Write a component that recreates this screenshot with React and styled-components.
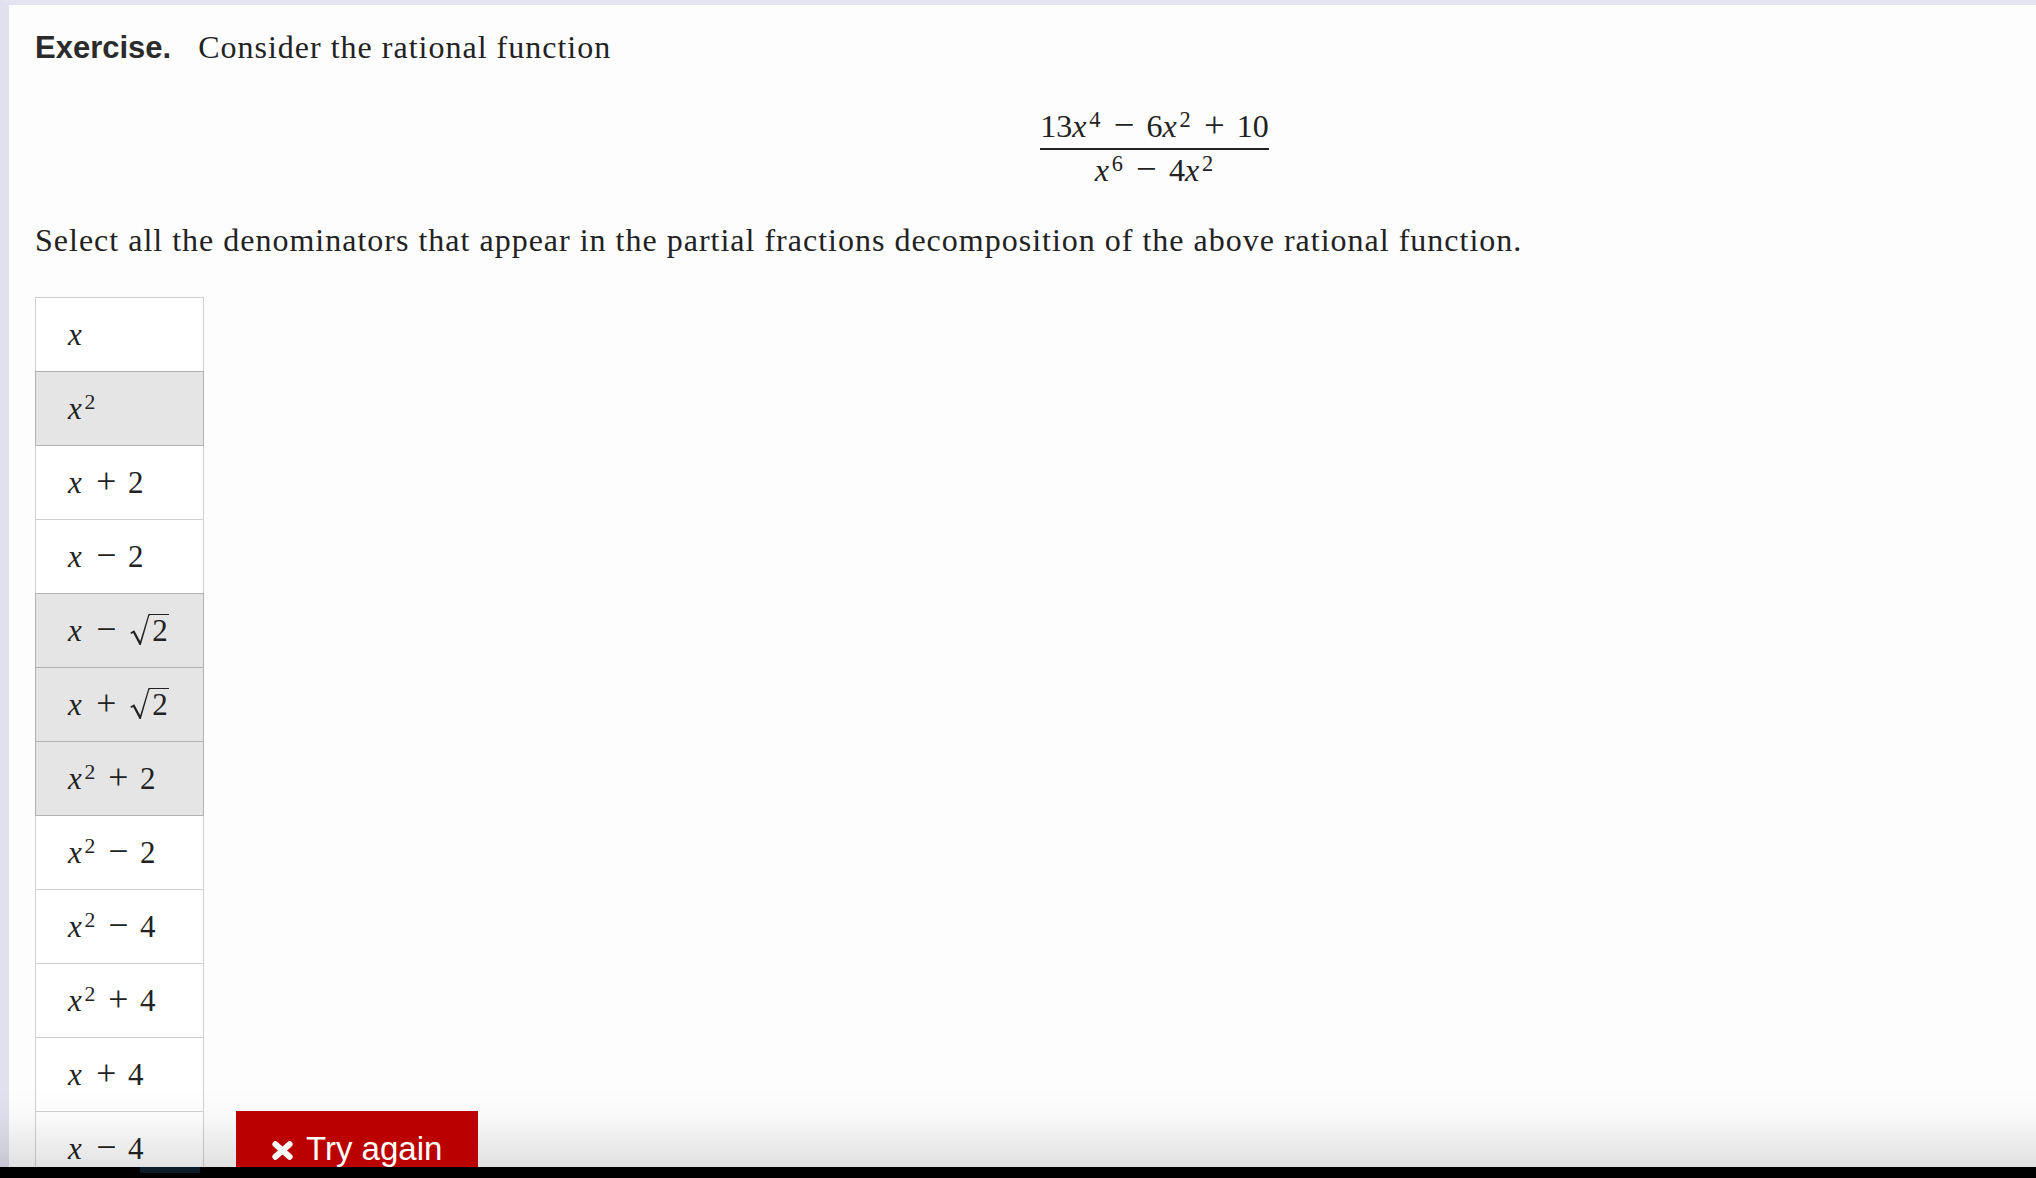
import React from 'react';
import styled, { createGlobalStyle } from 'styled-components';

const GlobalStyle = createGlobalStyle`
  html, body {
    margin: 0;
    padding: 0;
    overflow: hidden;
    background: #fdfdfd;
  }
  body {
    font-family: "Liberation Serif", "Times New Roman", serif;
    color: #222;
  }
`;

const Frame = styled.main`
  box-sizing: border-box;
  min-height: 100vh;
  border-top: 5px solid #e4e3f0;
  border-left: 9px solid #e1e0ee;
  padding: 22px 0 0 26px;
`;

const Heading = styled.div`
  font-size: 32px;
  line-height: 40px;
  white-space: nowrap;
`;

const Label = styled.span`
  font-family: "Liberation Sans", Arial, sans-serif;
  font-weight: 700;
  font-size: 31px;
  color: #2b2b2b;
  margin-right: 27px;
`;

const Lead = styled.span`
  letter-spacing: 1px;
`;

// display math is centred in a column that runs off the cropped right edge
const Display = styled.div`
  margin-top: 40px;
  padding-left: 238px;
  display: flex;
  justify-content: center;
`;

const Frac = styled.div`
  display: inline-flex;
  flex-direction: column;
  align-items: stretch;
  text-align: center;
  font-size: 32px;
  white-space: nowrap;
`;

const Numer = styled.div`
  line-height: 36px;
  padding-bottom: 4px;
  border-bottom: 2px solid #222;
`;

const Denom = styled.div`
  line-height: 36px;
  padding-top: 2px;
`;

const Prompt = styled.p`
  margin: 32px 0 0;
  font-size: 32px;
  letter-spacing: 1px;
  line-height: 40px;
  white-space: nowrap;
`;

const Options = styled.div`
  margin-top: 37px;
  width: 169px;
  display: flex;
  flex-direction: column;
`;

const Option = styled.div`
  position: relative;
  z-index: ${({ selected }) => (selected ? 1 : 0)};
  box-sizing: border-box;
  height: 75px;
  margin-top: -1px;
  padding: 17px 0 0 32px;
  border: 1px solid ${({ selected }) => (selected ? '#b2b2b2' : '#d0d0d0')};
  background: ${({ selected }) => (selected ? '#e5e5e5' : '#ffffff')};
  font-size: 31px;
  line-height: 40px;
  white-space: nowrap;
  cursor: pointer;

  &:first-child {
    margin-top: 0;
  }
`;

const Var = styled.i`
  font-style: italic;
  padding-right: 0.09em;
`;

const Sup = styled.sup`
  font-size: 0.7em;
  vertical-align: 0.45em;
  line-height: 0;
  margin-right: 0.05em;
`;

const Op = styled.span`
  display: inline-block;
  font-size: 1.15em;
  line-height: 0.8;
  width: 1.22em;
  text-align: center;
`;

const Surd = styled.svg`
  width: 20px;
  height: 32px;
  vertical-align: -5px;
  margin-left: 0.06em;
`;

const Radicand = styled.span`
  display: inline-block;
  line-height: 1;
  border-top: 1.5px solid #222;
  padding: 0 0.04em 0 0.08em;
`;

const Sqrt = ({ children }) => (
  <>
    <Surd viewBox="0 0 20 32">
      <path
        d="M0.5 18.6 L4.2 16.3 L10.2 27.2 L18.5 0 L20 0 L20 1.5 L19.3 1.5 L10.8 31 L9.5 31 L3.2 19 L1 19.9 Z"
        fill="#222"
      />
    </Surd>
    <Radicand>{children}</Radicand>
  </>
);

const Footer = styled.div`
  position: fixed;
  left: 0;
  right: 0;
  bottom: 0;
  z-index: 5;
  box-sizing: border-box;
  height: 88px;
  padding: 21px 0 0 236px;
  overflow: hidden;
  background: linear-gradient(
    to bottom,
    rgba(0, 0, 0, 0) 0px,
    rgba(0, 0, 0, 0.015) 25px,
    rgba(0, 0, 0, 0.11) 77px,
    rgba(0, 0, 0, 0.12) 88px
  );
`;

const RetryButton = styled.button`
  display: inline-block;
  margin: 0;
  padding: 18px 36px;
  border: 0;
  border-radius: 0;
  background: #bb0000;
  color: #fff;
  font-family: "Liberation Sans", Arial, sans-serif;
  font-size: 33px;
  line-height: 40px;
  white-space: nowrap;
  cursor: pointer;

  svg {
    width: 21px;
    height: 19px;
    margin-right: 13px;
    vertical-align: 0;
  }
`;

const SystemBar = styled.div`
  position: fixed;
  left: 0;
  right: 0;
  bottom: 0;
  z-index: 10;
  height: 11px;
  background: #000;
`;

const DockHint = styled.div`
  width: 60px;
  height: 6px;
  margin-left: 140px;
  background: #0c1c29;
`;

const options = [
  { key: 'x', selected: false, math: <Var>x</Var> },
  { key: 'x2', selected: true, math: <><Var>x</Var><Sup>2</Sup></> },
  { key: 'x+2', selected: false, math: <><Var>x</Var><Op>+</Op>2</> },
  { key: 'x-2', selected: false, math: <><Var>x</Var><Op>−</Op>2</> },
  { key: 'x-r2', selected: true, math: <><Var>x</Var><Op>−</Op><Sqrt>2</Sqrt></> },
  { key: 'x+r2', selected: true, math: <><Var>x</Var><Op>+</Op><Sqrt>2</Sqrt></> },
  { key: 'x2+2', selected: true, math: <><Var>x</Var><Sup>2</Sup><Op>+</Op>2</> },
  { key: 'x2-2', selected: false, math: <><Var>x</Var><Sup>2</Sup><Op>−</Op>2</> },
  { key: 'x2-4', selected: false, math: <><Var>x</Var><Sup>2</Sup><Op>−</Op>4</> },
  { key: 'x2+4', selected: false, math: <><Var>x</Var><Sup>2</Sup><Op>+</Op>4</> },
  { key: 'x+4', selected: false, math: <><Var>x</Var><Op>+</Op>4</> },
  { key: 'x-4', selected: false, math: <><Var>x</Var><Op>−</Op>4</> },
];

const App = () => {
  return (
    <>
      <GlobalStyle />
      <Frame>
        <Heading>
          <Label>Exercise.</Label>
          <Lead>Consider the rational function</Lead>
        </Heading>

        <Display>
          <Frac>
            <Numer>
              13<Var>x</Var><Sup>4</Sup><Op>−</Op>6<Var>x</Var><Sup>2</Sup><Op>+</Op>10
            </Numer>
            <Denom>
              <Var>x</Var><Sup>6</Sup><Op>−</Op>4<Var>x</Var><Sup>2</Sup>
            </Denom>
          </Frac>
        </Display>

        <Prompt>
          Select all the denominators that appear in the partial fractions decomposition of the above rational function.
        </Prompt>

        <Options>
          {options.map((opt) => (
            <Option key={opt.key} selected={opt.selected}>
              {opt.math}
            </Option>
          ))}
        </Options>
      </Frame>

      <Footer>
        <RetryButton type="button">
          <svg viewBox="0 0 21 19">
            <path
              d="M3.4 3.2 L17.6 15.8 M17.6 3.2 L3.4 15.8"
              stroke="#fff"
              strokeWidth="6"
              strokeLinecap="round"
            />
          </svg>
          Try again
        </RetryButton>
      </Footer>

      <SystemBar>
        <DockHint />
      </SystemBar>
    </>
  );
};

export default App;
